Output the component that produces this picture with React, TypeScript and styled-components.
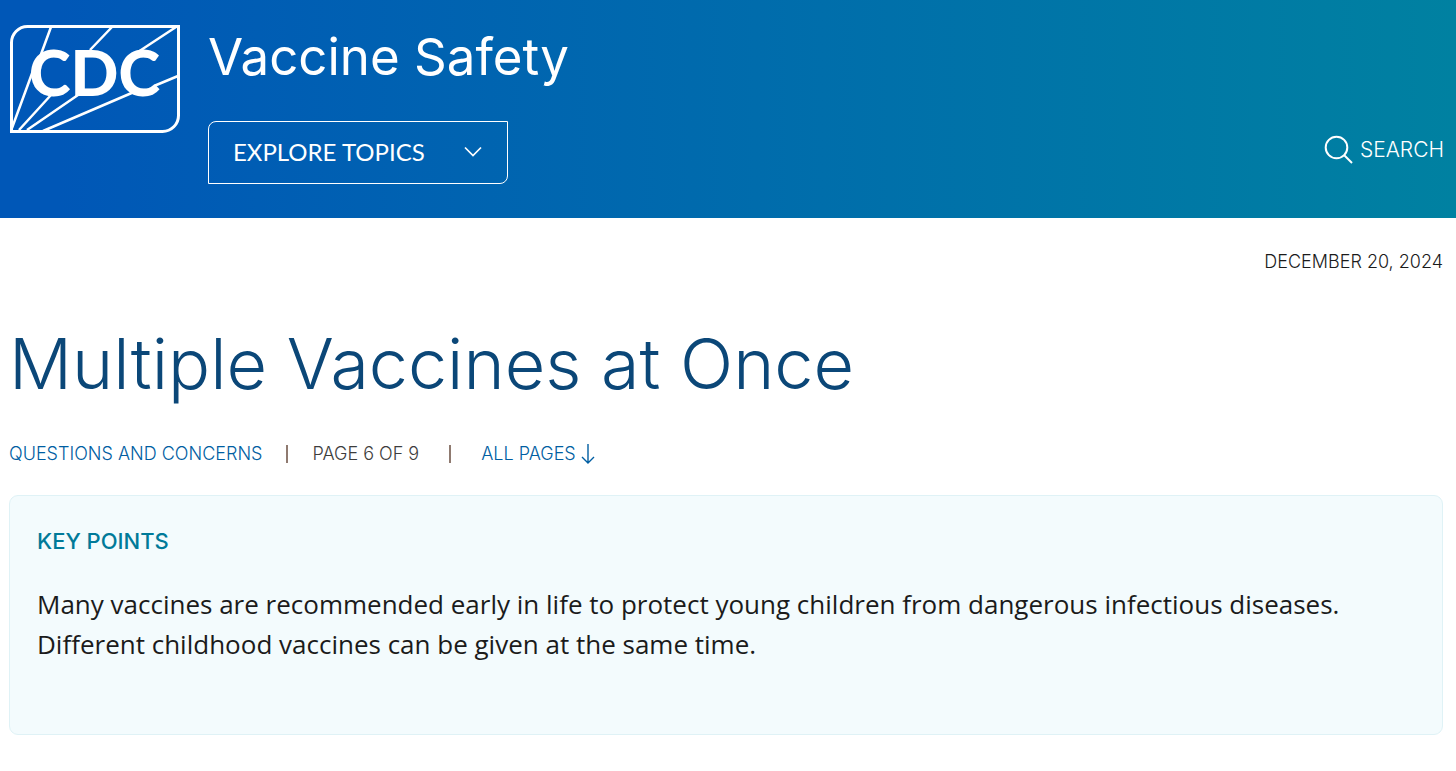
import React from 'react';
import styled, { createGlobalStyle } from 'styled-components';

const heading = `Inter, 'Liberation Sans', sans-serif`;
const label = `Lato, 'Liberation Sans', sans-serif`;
const body = `'Open Sans', 'Liberation Sans', sans-serif`;

const GlobalStyle = createGlobalStyle`
  *, *::before, *::after { box-sizing: border-box; }
  body {
    margin: 0;
    background: #fff;
    color: #1b1b1b;
    font-family: ${body};
  }
  h1, h2, p { margin: 0; padding: 0; }
  a { text-decoration: none; }
`;

const Header = styled.header`
  display: flex;
  align-items: flex-start;
  gap: 28px;
  padding: 24px 12px 34px 10px;
  color: #fff;
  background: linear-gradient(to right, #0057b7 0%, #0057b7 4%, #0081a1 100%);
`;

const LogoLink = styled.a`
  display: block;
  flex: none;
  color: inherit;

  svg { display: block; }
`;

const LogoText = styled.text`
  font-family: Lato, sans-serif;
  font-weight: 900;
  font-size: 63px;
  fill: #fff;
`;

const Site = styled.div`
  flex: 1;
  min-width: 0;
`;

const SiteName = styled.a`
  display: block;
  margin-bottom: 31px;
  color: inherit;
  font-family: ${heading};
  font-size: 51px;
  line-height: 66px;
`;

const Tools = styled.div`
  display: flex;
  align-items: center;
  justify-content: space-between;
`;

const TopicsButton = styled.button`
  display: flex;
  align-items: center;
  justify-content: space-between;
  width: 300px;
  height: 63px;
  padding: 0 25px 2px 24px;
  border: 1px solid #fff;
  border-radius: 8px 0;
  background: transparent;
  color: inherit;
  font-family: ${label};
  font-size: 24px;
  line-height: 32px;
  cursor: pointer;
`;

const SearchButton = styled.button`
  display: flex;
  align-items: center;
  gap: 7px;
  padding: 0 0 6px;
  border: 0;
  background: transparent;
  color: inherit;
  font-family: ${heading};
  font-weight: 300;
  font-size: 21px;
  line-height: 32px;
  cursor: pointer;
`;

const Main = styled.main`
  display: flex;
  flex-direction: column;
  padding: 28px 13px 36px 9px;
`;

const PageDate = styled.time`
  align-self: flex-end;
  font-family: ${heading};
  font-weight: 300;
  font-size: 18px;
  line-height: 32px;
`;

const Title = styled.h1`
  margin-top: 38px;
  color: #0b4778;
  font-family: ${heading};
  font-weight: 300;
  font-size: 70px;
  line-height: 96px;
`;

const PageNav = styled.nav`
  display: flex;
  align-items: center;
  margin: 26px 0 25px;
  color: #3d3d3d;
  font-family: ${heading};
  font-weight: 300;
  font-size: 18px;
  line-height: 32px;
`;

const NavLink = styled.a`
  display: flex;
  align-items: center;
  gap: 5px;
  color: #005ea2;
`;

const Divider = styled.span<{ $gap: number }>`
  width: 2px;
  height: 18px;
  margin: 0 ${({ $gap }) => $gap}px;
  background: #8f7a70;
`;

const KeyPoints = styled.section`
  padding: 29px 27px 70px;
  border: 1px solid #dff2f6;
  border-radius: 9px;
  background: #f3fbfd;
`;

const KeyTitle = styled.h2`
  margin-bottom: 27px;
  color: #007a99;
  font-family: ${heading};
  font-weight: 500;
  font-size: 22px;
  line-height: 32px;
`;

const KeyText = styled.p`
  font-size: 26px;
  line-height: 40px;
`;

function Logo() {
  return (
    <svg width="170" height="110" viewBox="0 0 170 110" aria-hidden="true">
      <g fill="none" stroke="#fff">
        <path d="M1.5 107.5V18.5A16 16 0 0 1 17.5 2.5H168.5V91.5A16 16 0 0 1 152.5 107.5Z" strokeWidth="3" />
        <path
          d="M2 104L24 44M30 33L41 3M9 106L41 71M80 26L102 3M17 106L68 71M128 28L166 3M33 107L124 68M144 62L168 52"
          strokeWidth="2.5"
        />
      </g>
      <LogoText x="19" y="72">CDC</LogoText>
    </svg>
  );
}

export default function App() {
  return (
    <>
      <GlobalStyle />
      <Header>
        <LogoLink href="#" aria-label="CDC home">
          <Logo />
        </LogoLink>
        <Site>
          <SiteName href="#">Vaccine Safety</SiteName>
          <Tools>
            <TopicsButton type="button">
              EXPLORE TOPICS
              <svg width="18" height="12" viewBox="0 0 18 12" fill="none" stroke="currentColor" strokeWidth="1.7" aria-hidden="true">
                <path d="M1 1.5L9 9.5L17 1.5" />
              </svg>
            </TopicsButton>
            <SearchButton type="button">
              <svg width="29" height="29" viewBox="0 0 29 29" fill="none" stroke="currentColor" strokeWidth="2" aria-hidden="true">
                <circle cx="12.5" cy="12.5" r="10.8" />
                <path d="M20 20L28 28" />
              </svg>
              SEARCH
            </SearchButton>
          </Tools>
        </Site>
      </Header>
      <Main>
        <PageDate dateTime="2024-12-20">DECEMBER 20, 2024</PageDate>
        <Title>Multiple Vaccines at Once</Title>
        <PageNav aria-label="Pages in this section">
          <NavLink href="#">QUESTIONS AND CONCERNS</NavLink>
          <Divider $gap={24} />
          <span>PAGE 6 OF 9</span>
          <Divider $gap={30} />
          <NavLink href="#">
            ALL PAGES
            <svg width="14" height="20" viewBox="0 0 14 20" fill="none" stroke="currentColor" strokeWidth="1.4" aria-hidden="true">
              <path d="M7 0V19M1 13L7 19L13 13" />
            </svg>
          </NavLink>
        </PageNav>
        <KeyPoints aria-labelledby="key-points">
          <KeyTitle id="key-points">KEY POINTS</KeyTitle>
          <KeyText>
            Many vaccines are recommended early in life to protect young children from dangerous infectious diseases.
            Different childhood vaccines can be given at the same time.
          </KeyText>
        </KeyPoints>
      </Main>
    </>
  );
}
